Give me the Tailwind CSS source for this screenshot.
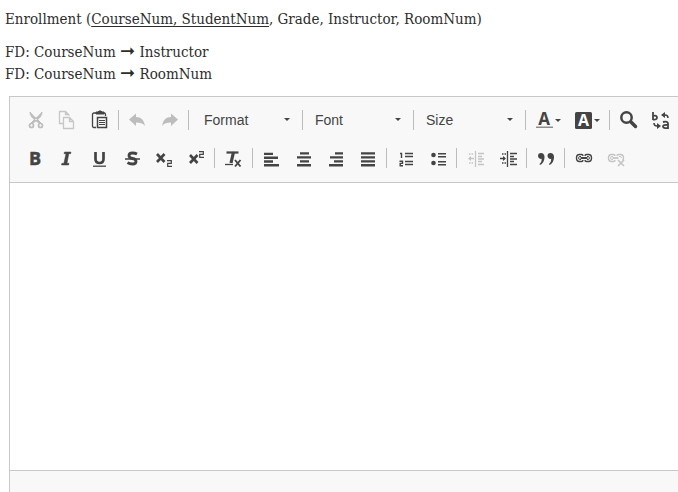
<!DOCTYPE html>
<html lang="en">
<head>
    <meta charset="UTF-8">
    <meta name="viewport" content="width=device-width, initial-scale=1.0">
    <title>Enrollment</title>
    <script src="https://cdn.jsdelivr.net/npm/@tailwindcss/browser@4"></script>
</head>
<body class="flex h-screen flex-col overflow-hidden bg-white text-[#2d2d2d]">
    <!-- Question -->
    <div class="px-[5px] pt-2 pb-[11px] font-['DejaVu_Serif_Condensed','Liberation_Serif',serif] text-[15px] leading-[22px]">
        <p class="mb-[11px]">Enrollment (<u class="underline-offset-2">CourseNum, StudentNum</u>, Grade, Instructor, RoomNum)</p>
        <p>FD: CourseNum <span class="font-['DejaVu_Sans',sans-serif] text-[18px] leading-none">➞</span> Instructor<br>FD: CourseNum <span class="font-['DejaVu_Sans',sans-serif] text-[18px] leading-none">➞</span> RoomNum</p>
    </div>

    <!-- Editor -->
    <div class="ml-[9px] flex flex-1 flex-col border-t border-l border-[#c8c8c8] font-['Liberation_Sans',sans-serif]">
        <div class="border-b border-[#c8c8c8] bg-[#f8f8f8] pt-1 pb-[5px] pl-[10px] text-[#444]">
            <div class="flex h-[38px] items-center">
                <button aria-label="Cut" class="flex w-8 shrink-0 justify-center text-[#bdbdbd]">
                    <svg class="size-6" viewBox="0 0 24 24" fill="none" stroke="currentColor"><path d="M6 4c0 3 2 6 5 8l5 4 1-1-4-4C10 9 8 6 6 4zM18 4c0 3-2 6-5 8l-5 4-1-1 4-4c3-2 5-5 7-7z" fill="currentColor" stroke-width="1"/><circle cx="7.500" cy="17.500" r="2" stroke-width="1.700"/><circle cx="16.500" cy="17.500" r="2" stroke-width="1.700"/></svg>
                </button>
                <button aria-label="Copy" class="flex w-8 shrink-0 justify-center text-[#c6c6c6]">
                    <svg class="size-6" viewBox="0 0 24 24" fill="none" stroke="currentColor" stroke-width="1.300"><path d="M7 15.500H3.500v-12h6l4 4M9.500 3.500v3h3M7.500 9.500h6l4 4v7h-10zM13.500 9.500v4h4"/></svg>
                </button>
                <button aria-label="Paste" class="flex w-8 shrink-0 justify-center">
                    <svg class="size-6" viewBox="0 0 24 24" fill="none" stroke="currentColor"><path d="M8 19.500H6q-1.500 0-1.500-1.500V6.500Q4.500 5 6 5h10q1.500 0 1.500 1.500V8" stroke-width="1.300"/><path d="M8 6V4h2l1-1h2l1 1h2v2z" fill="currentColor"/><path d="M9.500 9.500h9v10h-9z" stroke-width="1.500"/><path d="M11 12.500h6M11 14.500h6M11 16.500h6"/></svg>
                </button>
                <span class="mr-[3px] ml-[2px] h-5 w-px shrink-0 bg-[#bcbcbc]"></span>
                <button aria-label="Undo" class="flex w-8 shrink-0 justify-center text-[#bdbdbd]">
                    <svg class="size-6" viewBox="0 0 24 24" fill="currentColor"><path d="M3 11.500 10 5.500v3.500c5 0 8 3 9 9-2-3-5-3.500-9-3.500v3.500z"/></svg>
                </button>
                <button aria-label="Redo" class="flex w-8 shrink-0 justify-center text-[#bdbdbd]">
                    <svg class="size-6" viewBox="0 0 24 24" fill="currentColor"><path d="m20 11.500-7-6v3.500c-5 0-8 3-9 9 2-3 5-3.500 9-3.500v3.500z"/></svg>
                </button>
                <span class="mr-[3px] ml-[2px] h-5 w-px shrink-0 bg-[#bcbcbc]"></span>
                <div class="relative w-[108px] shrink-0">
                    <select aria-label="Format" class="w-full appearance-none pl-3 text-[14px] leading-5"><option>Format</option></select>
                    <svg class="pointer-events-none absolute top-2 right-[10px] h-[6px] w-[6px]" viewBox="0 0 6 6" fill="currentColor"><path d="M0 2h6L3 5z"/></svg>
                </div>
                <span class="mr-[3px] ml-[2px] h-5 w-px shrink-0 bg-[#bcbcbc]"></span>
                <div class="relative w-[105px] shrink-0">
                    <select aria-label="Font" class="w-full appearance-none pl-[9px] text-[14px] leading-5"><option>Font</option></select>
                    <svg class="pointer-events-none absolute top-2 right-[10px] h-[6px] w-[6px]" viewBox="0 0 6 6" fill="currentColor"><path d="M0 2h6L3 5z"/></svg>
                </div>
                <span class="mr-[3px] ml-[2px] h-5 w-px shrink-0 bg-[#bcbcbc]"></span>
                <div class="relative w-[106px] shrink-0">
                    <select aria-label="Size" class="w-full appearance-none pl-[9px] text-[14px] leading-5"><option>Size</option></select>
                    <svg class="pointer-events-none absolute top-2 right-[10px] h-[6px] w-[6px]" viewBox="0 0 6 6" fill="currentColor"><path d="M0 2h6L3 5z"/></svg>
                </div>
                <span class="mr-[3px] ml-[2px] h-5 w-px shrink-0 bg-[#bcbcbc]"></span>
                <button aria-label="Text Color" class="w-[39px] shrink-0">
                    <svg class="h-6 w-9" viewBox="0 0 36 24" fill="currentColor"><text x="15" y="17" text-anchor="middle" class="font-['Open_Sans',sans-serif] text-[17px] font-bold">A</text><path d="M7 18.500h17v1.500H7z" fill="#8c8c8c"/><path d="M26 11h6l-3 3z"/></svg>
                </button>
                <button aria-label="Background Color" class="w-[39px] shrink-0">
                    <svg class="h-6 w-9" viewBox="0 0 36 24" fill="currentColor"><rect x="7" y="4" width="17" height="17" rx="1.500"/><text x="15.500" y="18" text-anchor="middle" fill="#fff" class="font-['Open_Sans',sans-serif] text-[16px] font-bold">A</text><path d="M26 11h6l-3 3z"/></svg>
                </button>
                <span class="mr-[3px] ml-[2px] h-5 w-px shrink-0 bg-[#bcbcbc]"></span>
                <button aria-label="Find" class="flex w-8 shrink-0 justify-center">
                    <svg class="size-6" viewBox="0 0 24 24" fill="none" stroke="currentColor"><circle cx="9.500" cy="9.500" r="5.200" stroke-width="2.500"/><path d="m14 14 4.500 4.500" stroke-width="3.500" stroke-linecap="round"/></svg>
                </button>
                <button aria-label="Replace" class="flex w-8 shrink-0 justify-center">
                    <svg class="size-6" viewBox="0 0 24 24" fill="none" stroke="currentColor" stroke-width="1.800"><path d="M4 4v8M4 8q4-1 4 1.500T4 11.500"/><path d="M14 14q5-1 5 1.500V21M19 17q-5-.5-5 1.500t5 1.500"/><path d="M19 10q0-3-3-3M5 15q0 3 3 3" stroke-width="1.500"/><path d="m12 7 4-3v6zM12 18l-4-3v6z" fill="currentColor" stroke="none"/></svg>
                </button>
            </div>

            <div class="flex h-[38px] items-center">
                <button aria-label="Bold" class="flex w-8 shrink-0 justify-center">
                    <svg class="size-6" viewBox="0 0 24 24" fill="currentColor" stroke="currentColor" stroke-width=".5"><text x="5" y="19" class="font-['Open_Sans',sans-serif] text-[18px] font-bold">B</text></svg>
                </button>
                <button aria-label="Italic" class="flex w-8 shrink-0 justify-center">
                    <svg class="size-6" viewBox="0 0 24 24" fill="currentColor" stroke="currentColor" stroke-width=".5"><path d="M8.500 6H15l-.4 1.700h-1.800L11 17.300h2l-.4 1.700H5.500l.4-1.700h2l2.100-9.600H8z"/></svg>
                </button>
                <button aria-label="Underline" class="flex w-8 shrink-0 justify-center">
                    <svg class="size-6" viewBox="0 0 24 24" fill="none" stroke="currentColor"><path d="M7.500 6v7q0 4 4 4t4-4V6" stroke-width="2.700"/><path d="M5 20.200h13" stroke-width="1.300"/></svg>
                </button>
                <button aria-label="Strikethrough" class="flex w-8 shrink-0 justify-center">
                    <svg class="size-6" viewBox="0 0 24 24" fill="none" stroke="currentColor"><path d="M17 8q-2-1-4.500-1-3.500 0-3.500 2.500t3.500 3 3.500 3-3.500 2.500q-3 0-5-1.300" stroke-width="2.800"/><path d="M5 13h15" stroke-width="1.500"/></svg>
                </button>
                <button aria-label="Subscript" class="flex w-8 shrink-0 justify-center">
                    <svg class="size-6" viewBox="0 0 24 24" fill="none" stroke="currentColor"><path d="m5 8 7.500 8M12.500 8 5 16" stroke-width="2.600"/><path d="M15 14.700h4.300v2.600h-3.600v3h4.300" stroke-width="1.200"/></svg>
                </button>
                <button aria-label="Superscript" class="flex w-8 shrink-0 justify-center">
                    <svg class="size-6" viewBox="0 0 24 24" fill="none" stroke="currentColor"><path d="m6 9 7.500 8M13.500 9 6 17" stroke-width="2.600"/><path d="M15 5.700h4.300v2.600h-3.600v3h4.300" stroke-width="1.200"/></svg>
                </button>
                <span class="mr-[3px] ml-[2px] h-5 w-px shrink-0 bg-[#bcbcbc]"></span>
                <button aria-label="Remove Format" class="flex w-8 shrink-0 justify-center">
                    <svg class="size-6" viewBox="0 0 24 24" fill="none" stroke="currentColor"><path d="M4.500 6.500h12" stroke-width="2.200"/><path d="M11.500 6 9 17" stroke-width="3.200"/><path d="M3 18.500h8" stroke-width="1.300"/><path d="m13 14 5.500 6.500M18.500 14 13 20.500" stroke-width="1.900"/></svg>
                </button>
                <span class="mr-[3px] ml-[2px] h-5 w-px shrink-0 bg-[#bcbcbc]"></span>
                <button aria-label="Align Left" class="flex w-8 shrink-0 justify-center">
                    <svg class="size-6" viewBox="0 0 24 24" fill="currentColor"><path d="M4 6.700h9v2.400H4zM4 10.500h14v2.400H4zM4 14.300h9v2.400H4zM4 18h15v2.400H4z"/></svg>
                </button>
                <button aria-label="Center" class="flex w-8 shrink-0 justify-center">
                    <svg class="size-6" viewBox="0 0 24 24" fill="currentColor"><path d="M8 6.200h9v2.400H8zM5 10.200h14v2.400H5zM8 14.200h9v2.400H8zM5 18h14v2.400H5z"/></svg>
                </button>
                <button aria-label="Align Right" class="flex w-8 shrink-0 justify-center">
                    <svg class="size-6" viewBox="0 0 24 24" fill="currentColor"><path d="M11 6.200h8v2.400h-8zM6 10.200h13v2.400H6zM10 14.200h9v2.400h-9zM5 18h14v2.400H5z"/></svg>
                </button>
                <button aria-label="Justify" class="flex w-8 shrink-0 justify-center">
                    <svg class="size-6" viewBox="0 0 24 24" fill="currentColor"><path d="M5 6.200h14v2.400H5zM5 10.200h14v2.400H5zM5 14.200h14v2.400H5zM5 18h14v2.400H5z"/></svg>
                </button>
                <span class="mr-[3px] ml-[2px] h-5 w-px shrink-0 bg-[#bcbcbc]"></span>
                <button aria-label="Numbered List" class="flex w-8 shrink-0 justify-center">
                    <svg class="size-6" viewBox="0 0 24 24" fill="none" stroke="currentColor" stroke-width="1.400"><path d="M6 7.500h1.500V12M5.500 15.200h3v2.200H6.200v2.300H9"/><path d="M11 7.500h8M11 10.500h8M11 15.500h8M11 18.500h8"/></svg>
                </button>
                <button aria-label="Bulleted List" class="flex w-8 shrink-0 justify-center">
                    <svg class="size-6" viewBox="0 0 24 24" fill="currentColor"><circle cx="7.500" cy="9" r="2.300"/><circle cx="7.500" cy="17" r="2.300"/><path d="M12 7h8v1.400h-8zM12 10h8v1.400h-8zM12 15h8v1.400h-8zM12 18h8v1.400h-8z"/></svg>
                </button>
                <span class="mr-[3px] ml-[2px] h-5 w-px shrink-0 bg-[#bcbcbc]"></span>
                <button aria-label="Decrease Indent" class="flex w-8 shrink-0 justify-center text-[#c4c4c4]">
                    <svg class="size-6" viewBox="0 0 24 24" fill="none" stroke="currentColor" stroke-width="1.300"><path d="M11.500 5v16M14 7.500h6M14 10.500h4M14 13h6M14 15.500h4M14 18.500h6M5 12.500h5"/><path d="M5 8h5M5 17h5" stroke-dasharray="1.500 1"/><path d="m7 10-3 2.500L7 15z" fill="currentColor" stroke="none"/></svg>
                </button>
                <button aria-label="Increase Indent" class="flex w-8 shrink-0 justify-center">
                    <svg class="size-6" viewBox="0 0 24 24" fill="none" stroke="currentColor" stroke-width="1.300"><path d="M11.500 5v16M14 7.500h7M14 10.500h4M14 13h7M14 15.500h4M14 18.500h7M4 12.500h5"/><path d="M6 8h4M6 17h4" stroke-dasharray="1.500 1"/><path d="m7 10 3 2.500L7 15z" fill="currentColor" stroke="none"/></svg>
                </button>
                <span class="mr-[3px] ml-[2px] h-5 w-px shrink-0 bg-[#bcbcbc]"></span>
                <button aria-label="Block Quote" class="flex w-8 shrink-0 justify-center">
                    <svg class="size-6" viewBox="0 0 24 24" fill="currentColor"><path d="M4 10a3 3 0 0 1 3-3c2 0 3.500 1.500 3.500 4 0 4-2 7-4.500 8l-.5-1c1.500-1 2.200-2.500 2.200-5.200A3 3 0 0 1 4 10zM13.500 10a3 3 0 0 1 3-3c2 0 3.500 1.500 3.500 4 0 4-2 7-4.500 8l-.5-1c1.500-1 2.200-2.500 2.200-5.200a3 3 0 0 1-3.700-2.800z"/></svg>
                </button>
                <span class="mr-[3px] ml-[2px] h-5 w-px shrink-0 bg-[#bcbcbc]"></span>
                <button aria-label="Link" class="flex w-8 shrink-0 justify-center">
                    <svg class="size-6" viewBox="0 0 24 24" fill="none" stroke="currentColor" stroke-width="1.400"><path d="M11 10q0-1.500-1.500-1.500h-2Q4.500 8.500 4.500 12t3 3.500h2Q11 15.500 11 14M13 10q0-1.500 1.500-1.500h2q3 0 3 3.500t-3 3.500h-2Q13 15.500 13 14"/><path d="M9 10.500H7.500Q6.700 10.500 6.700 12t.8 1.500H9M15 10.500h1.500q.8 0 .8 1.500t-.8 1.500H15" stroke-width="1"/><path d="M8.500 12h7" stroke-width="2"/></svg>
                </button>
                <button aria-label="Unlink" class="flex w-8 shrink-0 justify-center text-[#c4c4c4]">
                    <svg class="size-6" viewBox="0 0 24 24" fill="none" stroke="currentColor" stroke-width="1.400"><path d="M11 10q0-1.500-1.500-1.500h-2Q4.500 8.500 4.500 12t3 3.500h2Q11 15.500 11 14M13 10q0-1.500 1.500-1.500h2q3 0 3 3.500 0 1.500-1 2.500"/><path d="M9 10.500H7.500Q6.700 10.500 6.700 12t.8 1.500H9M15 10.500h1.500q.8 0 .8 1.500" stroke-width="1"/><path d="M8.500 12h6" stroke-width="1.800"/><path d="m14 14 6 6M20 14l-6 6" stroke-width="1.600"/></svg>
                </button>
            </div>
        </div>

        <textarea aria-label="Answer" class="block w-full flex-1 resize-none bg-white p-5 text-[14px] outline-none"></textarea>
        <div class="h-[22px] shrink-0 border-t border-[#c8c8c8] bg-[#f8f8f8]"></div>
    </div>
</body>
</html>
